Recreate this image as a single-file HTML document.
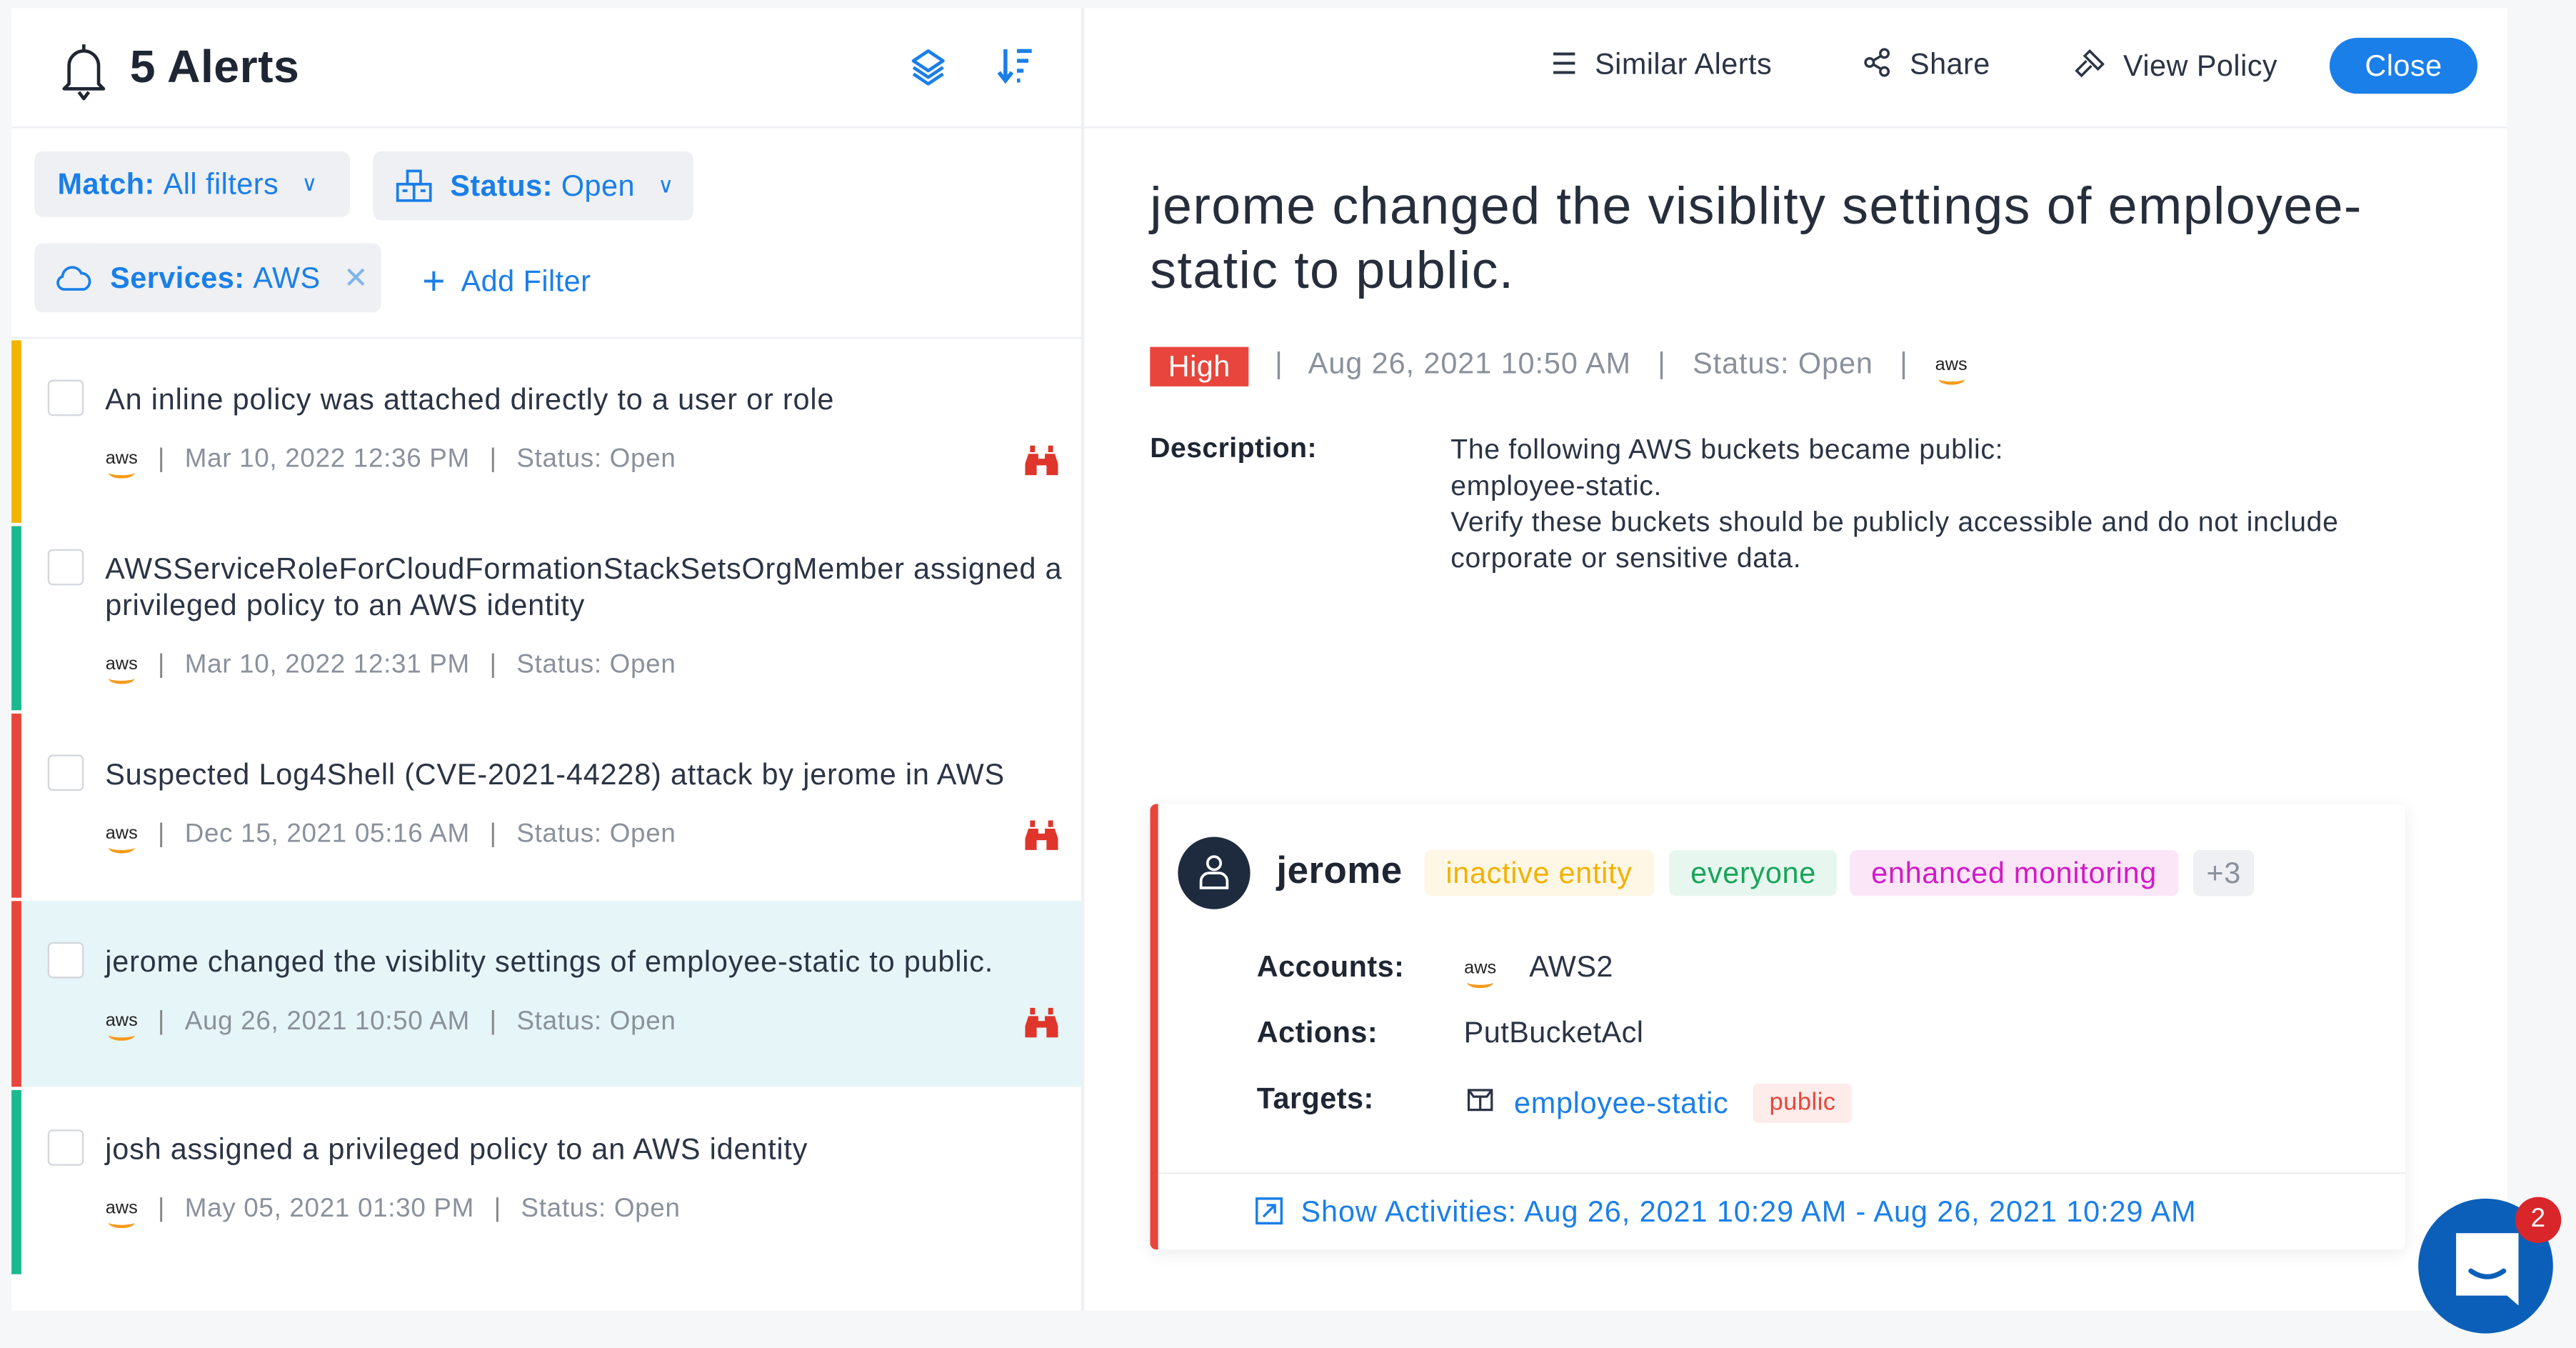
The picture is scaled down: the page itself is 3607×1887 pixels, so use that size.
<!DOCTYPE html>
<html><head><meta charset="utf-8">
<style>
*{box-sizing:border-box;margin:0;padding:0}
html,body{width:3607px;height:1885px;overflow:hidden;background:#f6f7f9;font-family:"Liberation Sans",Arial,sans-serif}
#w{position:absolute;left:0;top:0;width:1568px;height:820px;transform:scale(2.3004,2.3016);transform-origin:0 0;background:#f6f7f9;letter-spacing:0.2px}
.a{position:absolute}
.panel{position:absolute;background:#fff}
.chip{position:absolute;background:#eef0f4;border-radius:5px;color:#1a7fe8;font-size:18px;display:flex;align-items:center}
.t{position:absolute;left:64px;font-size:18px;color:#2b3445;line-height:22px;letter-spacing:0.35px}
.m{position:absolute;left:64px;font-size:16px;color:#8a919c;white-space:nowrap;letter-spacing:0.3px}
.m span.s{margin:0 12px;color:#888}
.aws{display:inline-block;font-size:11px;color:#222;line-height:9px;position:relative;width:20px;text-align:center;vertical-align:middle;letter-spacing:0}
.aws:after{content:"";position:absolute;left:2px;top:9px;width:16px;height:5px;border-bottom:2px solid #f59a1b;border-radius:0 0 50% 50%}
.cb{position:absolute;left:29px;width:22px;height:22px;border:1.5px solid #d4d7dc;border-radius:3px;background:#fff}
.bar{position:absolute;left:7px;width:6px}
.bin{position:absolute;left:623px;width:22px;height:20px}
.tag{position:absolute;top:517px;height:28px;border-radius:4px;font-size:18px;line-height:28px;padding:0 13px;letter-spacing:0.3px}
.lbl{position:absolute;left:765px;font-size:18px;font-weight:bold;color:#1f2633}
.val{position:absolute;left:891px;font-size:18px;color:#2b3445}
</style></head><body><div id="w">
<div class="panel" style="left:7px;top:5px;width:651px;height:792px"></div>
<div class="panel" style="left:660px;top:5px;width:866px;height:792px"></div>
<div class="a" style="left:7px;top:77px;width:651px;height:1px;background:#eceef2"></div>
<div class="a" style="left:660px;top:77px;width:866px;height:1px;background:#eceef2"></div>
<div class="a" style="left:7px;top:205px;width:651px;height:1px;background:#eceef2"></div>
<div class="a" style="left:658px;top:5px;width:2px;height:792px;background:#eef0f3"></div>

<svg class="a" style="left:34px;top:24px" width="34" height="38" viewBox="0 0 34 38"><path d="M17 3v3M8 27V16a9 9 0 0 1 18 0v11l3 3H5z M14 32l3 4 3-4" fill="none" stroke="#1f2633" stroke-width="2" stroke-linejoin="round"/></svg>
<div class="a" style="left:79px;top:25px;font-size:28px;font-weight:bold;color:#1f2633">5 Alerts</div>
<svg class="a" style="left:552px;top:28px" width="26" height="26" viewBox="0 0 26 26"><g fill="none" stroke="#1a7fe8" stroke-width="2" stroke-linejoin="round"><path d="M13 3l9 6-9 6-9-6z"/><path d="M4 13l9 6 9-6"/><path d="M4 17l9 6 9-6"/></g></svg>
<svg class="a" style="left:606px;top:28px" width="24" height="24" viewBox="0 0 24 24"><g stroke="#1a7fe8" stroke-width="2.4" fill="none"><path d="M6 2v18M2 16l4 5 4-5"/><path d="M13 3h9M13 9h7M13 15h4M13 21h2"/></g></svg>

<div class="chip" style="left:21px;top:92px;width:192px;height:40px;padding-left:14px"><b>Match:</b>&nbsp;All filters<span style="margin-left:14px;font-size:13px">&#8744;</span></div>
<div class="chip" style="left:227px;top:92px;width:195px;height:42px;padding-left:13px"><svg width="24" height="22" viewBox="0 0 24 22"><g fill="none" stroke="#1a7fe8" stroke-width="1.6"><rect x="2" y="10" width="20" height="10"/><rect x="8" y="2" width="8" height="8"/><path d="M12 10v10M5 14h3M16 14h3"/></g></svg><b style="margin-left:10px">Status:</b>&nbsp;Open<span style="margin-left:14px;font-size:13px">&#8744;</span></div>
<div class="chip" style="left:21px;top:148px;width:211px;height:42px;padding-left:12px"><svg width="24" height="20" viewBox="0 0 24 20"><path d="M6 17a4 4 0 0 1-1-7.8 6 6 0 0 1 11.5-2A5 5 0 0 1 18 17z" fill="none" stroke="#1a7fe8" stroke-width="1.6"/></svg><b style="margin-left:10px">Services:</b>&nbsp;AWS<span style="margin-left:14px;color:#7fb4ee">&#10005;</span></div>
<div class="a" style="left:257px;top:158px;font-size:18px;color:#1a7fe8"><span style="font-size:24px;vertical-align:-2px">+</span>&nbsp; Add Filter</div>

<div class="a" style="left:13px;top:548px;width:645px;height:113px;background:#e6f5f7"></div>
<div class="bar" style="top:207px;height:111px;background:#f1b500"></div>
<div class="bar" style="top:320px;height:112px;background:#1ab98f"></div>
<div class="bar" style="top:434px;height:112px;background:#e8463c"></div>
<div class="bar" style="top:548px;height:113px;background:#e8463c"></div>
<div class="bar" style="top:663px;height:112px;background:#1ab98f"></div>

<div class="cb" style="top:231px"></div>
<div class="t" style="top:232px">An inline policy was attached directly to a user or role</div>
<div class="m" style="top:271px"><span class="aws">aws</span><span class="s">|</span>Mar 10, 2022 12:36 PM<span class="s">|</span>Status: Open</div>

<div class="cb" style="top:334px"></div>
<div class="t" style="top:335px;width:590px">AWSServiceRoleForCloudFormationStackSetsOrgMember assigned a privileged policy to an AWS identity</div>
<div class="m" style="top:396px"><span class="aws">aws</span><span class="s">|</span>Mar 10, 2022 12:31 PM<span class="s">|</span>Status: Open</div>

<div class="cb" style="top:459px"></div>
<div class="t" style="top:460px">Suspected Log4Shell (CVE-2021-44228) attack by jerome in AWS</div>
<div class="m" style="top:499px"><span class="aws">aws</span><span class="s">|</span>Dec 15, 2021 05:16 AM<span class="s">|</span>Status: Open</div>

<div class="cb" style="top:573px"></div>
<div class="t" style="top:574px">jerome changed the visiblity settings of employee-static to public.</div>
<div class="m" style="top:613px"><span class="aws">aws</span><span class="s">|</span>Aug 26, 2021 10:50 AM<span class="s">|</span>Status: Open</div>

<div class="cb" style="top:687px"></div>
<div class="t" style="top:688px">josh assigned a privileged policy to an AWS identity</div>
<div class="m" style="top:727px"><span class="aws">aws</span><span class="s">|</span>May 05, 2021 01:30 PM<span class="s">|</span>Status: Open</div>

<svg class="bin" style="top:270px" viewBox="0 0 22 20"><path d="M4 1h3v4H4zM15 1h3v4h-3zM3 6h6v3h4V6h6l2 6v7h-7v-6h-6v6H1v-7z" fill="#e0352b"/></svg>
<svg class="bin" style="top:498px" viewBox="0 0 22 20"><path d="M4 1h3v4H4zM15 1h3v4h-3zM3 6h6v3h4V6h6l2 6v7h-7v-6h-6v6H1v-7z" fill="#e0352b"/></svg>
<svg class="bin" style="top:612px" viewBox="0 0 22 20"><path d="M4 1h3v4H4zM15 1h3v4h-3zM3 6h6v3h4V6h6l2 6v7h-7v-6h-6v6H1v-7z" fill="#e0352b"/></svg>

<div class="a" style="left:944px;top:29px;font-size:18px;color:#2b3445">☰&nbsp; Similar Alerts</div>
<div class="a" style="left:1134px;top:29px;font-size:18px;color:#2b3445"><svg width="18" height="18" viewBox="0 0 18 18" style="vertical-align:-2px"><g fill="none" stroke="#2b3445" stroke-width="1.5"><circle cx="4" cy="9" r="2.5"/><circle cx="13" cy="3.5" r="2.5"/><circle cx="13" cy="14.5" r="2.5"/><path d="M6 8l5-3M6 10l5 3"/></g></svg>&nbsp; Share</div>
<div class="a" style="left:1262px;top:29px;font-size:18px;color:#2b3445"><svg width="20" height="20" viewBox="0 0 20 20" style="vertical-align:-3px"><g fill="none" stroke="#2b3445" stroke-width="1.5"><path d="M10 2l8 8-3 3-8-8zM8 8l-6 6 3 3 6-6"/></g></svg>&nbsp; View Policy</div>
<div class="a" style="left:1418px;top:23px;width:90px;height:34px;border-radius:17px;background:#1a7fe8;color:#fff;font-size:18px;text-align:center;line-height:34px">Close</div>

<div class="a" style="left:700px;top:106px;width:790px;font-size:32px;line-height:39px;color:#262e3c;letter-spacing:0.6px">jerome changed the visiblity settings of employee-static to public.</div>
<div class="a" style="left:700px;top:211px;width:60px;height:24px;background:#e8463c;color:#fff;font-size:18px;text-align:center;line-height:24px">High</div>
<div class="a" style="left:776px;top:211px;font-size:18px;color:#8a919c;white-space:nowrap;letter-spacing:0.4px">|&nbsp;&nbsp; Aug 26, 2021 10:50 AM &nbsp; | &nbsp; Status: Open &nbsp; | &nbsp; <span class="aws">aws</span></div>

<div class="a" style="left:700px;top:263px;font-size:17px;font-weight:bold;color:#1f2633">Description:</div>
<div class="a" style="left:883px;top:263px;font-size:17px;line-height:22px;color:#2b3445;width:585px;letter-spacing:0.3px">The following AWS buckets became public:<br>employee-static.<br>Verify these buckets should be publicly accessible and do not include corporate or sensitive data.</div>

<div class="a" style="left:700px;top:489px;width:764px;height:271px;background:#fff;border-left:5px solid #e8463c;border-radius:4px;box-shadow:0 2px 10px rgba(0,0,0,0.08)"></div>
<div class="a" style="left:705px;top:713px;width:759px;height:1px;background:#eceef2"></div>
<div class="a" style="left:717px;top:509px;width:44px;height:44px;border-radius:50%;background:#1e2b3f"></div>
<svg class="a" style="left:727px;top:518px" width="24" height="26" viewBox="0 0 24 26"><g fill="none" stroke="#fff" stroke-width="1.6"><circle cx="12" cy="7" r="4"/><path d="M4 22v-4a5 5 0 0 1 5-5h6a5 5 0 0 1 5 5v4z"/></g></svg>
<div class="a" style="left:777px;top:516px;font-size:23px;font-weight:bold;color:#1f2633">jerome</div>
<div class="tag" style="left:867px;background:#fff7e6;color:#f2b200">inactive entity</div>
<div class="tag" style="left:1016px;background:#e7f7ef;color:#18a55a">everyone</div>
<div class="tag" style="left:1126px;background:#fbe6f8;color:#d21ac7">enhanced monitoring</div>
<div class="tag" style="left:1335px;background:#eef0f3;color:#8a919c;padding:0 8px">+3</div>

<div class="lbl" style="top:578px">Accounts:</div>
<div class="val" style="top:578px"><span class="aws">aws</span>&nbsp;&nbsp;&nbsp; AWS2</div>
<div class="lbl" style="top:618px">Actions:</div>
<div class="val" style="top:618px">PutBucketAcl</div>
<div class="lbl" style="top:658px">Targets:</div>
<div class="val" style="top:660px;color:#1a7fe8;letter-spacing:0.3px"><svg width="20" height="18" viewBox="0 0 20 18" style="vertical-align:-1px"><g fill="none" stroke="#2b3445" stroke-width="1.4"><path d="M3 3h14v12H3zM3 3l3 4h8l3-4M10 7v8"/></g></svg>&nbsp; employee-static</div>
<div class="a" style="left:1067px;top:659px;height:24px;padding:0 10px;background:#fdecea;color:#e8463c;font-size:15px;line-height:24px;border-radius:3px">public</div>

<div class="a" style="left:764px;top:727px;font-size:18px;color:#1a7fe8;white-space:nowrap;letter-spacing:0.4px"><svg width="17" height="17" viewBox="0 0 17 17" style="vertical-align:-2px"><g fill="none" stroke="#1a7fe8" stroke-width="1.5"><rect x="1" y="1" width="15" height="15"/><path d="M5 12l7-7M7 5h5v5"/></g></svg>&nbsp; Show Activities: Aug 26, 2021 10:29 AM - Aug 26, 2021 10:29 AM</div>

<div class="a" style="left:1472px;top:729px;width:82px;height:82px;border-radius:50%;background:#0b5fb8"></div>
<svg class="a" style="left:1492px;top:747px" width="44" height="48" viewBox="0 0 44 48"><path d="M3 3h38v38H41v6l-7-6H3z" fill="#fff"/><path d="M12 26q10 7 20 0" fill="none" stroke="#0b5fb8" stroke-width="3" stroke-linecap="round"/></svg>
<div class="a" style="left:1531px;top:728px;width:28px;height:28px;border-radius:50%;background:#d9262b;color:#fff;font-size:16px;text-align:center;line-height:28px">2</div>
</div></body></html>
